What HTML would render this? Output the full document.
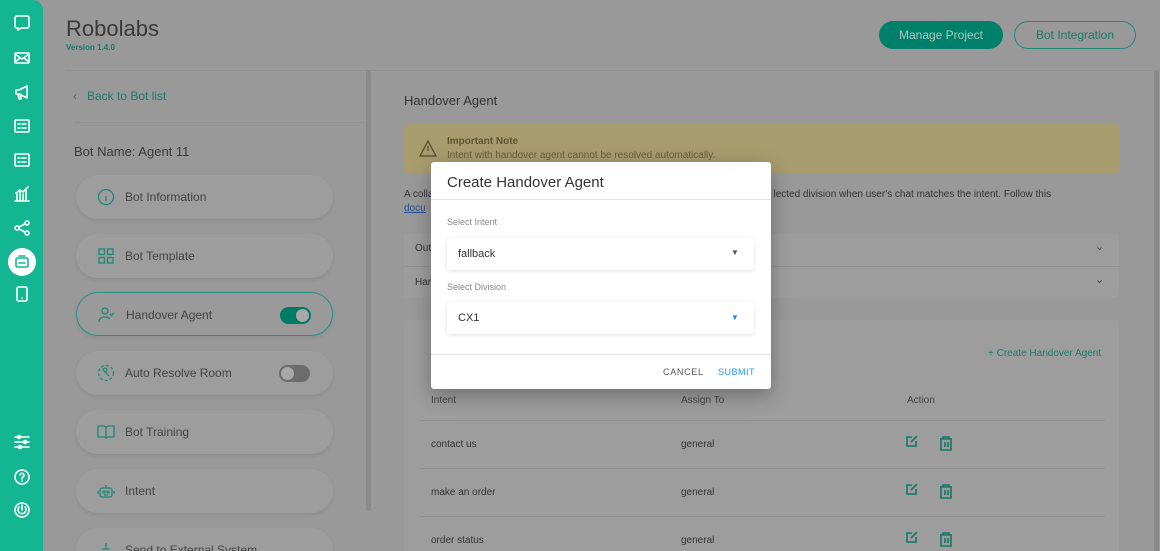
<!DOCTYPE html>
<html><head><meta charset="utf-8">
<style>
*{box-sizing:border-box;margin:0;padding:0}
html,body{width:1160px;height:551px;overflow:hidden}
body{background:#999;font-family:"Liberation Sans",sans-serif;position:relative;color:#3a3a3a}
.abs{position:absolute}
.side{left:0;top:0;width:43px;height:551px;background:#14b592;border-radius:0 10px 0 0}
.side svg{position:absolute;left:13px;width:18px;height:18px;fill:none;stroke:#fff;stroke-width:1.6;stroke-linecap:round;stroke-linejoin:round}
.pill{position:absolute;left:76px;width:257px;height:44px;border-radius:22px;background:#9d9d9d;box-shadow:0 2px 4px rgba(0,0,0,.08);font-size:12px;color:#444}
.pill span{position:absolute;left:49px;top:15px}
.pill svg{position:absolute;left:21px;top:13px;width:18px;height:18px;fill:none;stroke:#1d8a76;stroke-width:1.3}
.tgl{position:absolute;left:203px;top:14px;width:31px;height:17px;border-radius:9px}
.tgl i{position:absolute;top:2px;width:13px;height:13px;border-radius:50%;background:#a8a8a8}
.t{position:absolute;white-space:nowrap}
.row{position:absolute;left:420px;width:685px;height:1px;background:#8f8f8f}
</style></head><body>
<div class="abs side">
<svg style="top:14px" viewBox="0 0 18 18"><path d="M4 2h10a2 2 0 0 1 2 2v8a2 2 0 0 1-2 2H8l-3 2v-2H4a2 2 0 0 1-2-2V4a2 2 0 0 1 2-2z"/></svg>
<svg style="top:49px" viewBox="0 0 18 18"><rect x="2" y="4" width="14" height="10" rx="1"/><path d="M2 5l7 5 7-5M2 13l5-4M16 13l-5-4"/></svg>
<svg style="top:83px" viewBox="0 0 18 18"><path d="M3 7h3l8-4v12l-8-4H3zM5 11l1 5h2l-1-5"/></svg>
<svg style="top:117px" viewBox="0 0 18 18"><rect x="2" y="3" width="14" height="12" rx="1"/><path d="M5 7h2M5 11h2M9 7h4M9 11h4"/></svg>
<svg style="top:151px" viewBox="0 0 18 18"><rect x="2" y="3" width="14" height="12" rx="1"/><path d="M5 7h2M5 11h2M9 7h4M9 11h4"/></svg>
<svg style="top:185px" viewBox="0 0 18 18"><path d="M2 16h14M4 15V9M7 15V7M10 15V9M13 15V5M3 8l4-3 3 2 5-5"/></svg>
<svg style="top:219px" viewBox="0 0 18 18"><circle cx="4" cy="9" r="2"/><circle cx="14" cy="4" r="2"/><circle cx="14" cy="14" r="2"/><path d="M6 8l6-3M6 10l6 3"/></svg>
<div style="position:absolute;left:8px;top:248px;width:28px;height:28px;border-radius:50%;background:#fff"></div>
<svg style="top:253px;stroke:#14b592" viewBox="0 0 18 18"><rect x="3" y="5" width="12" height="9" rx="1.5"/><path d="M6 3h6M6 10h6"/></svg>
<svg style="top:285px" viewBox="0 0 18 18"><rect x="4" y="2" width="10" height="14" rx="1.5"/><path d="M9 13h.1"/></svg>
<svg style="top:433px" viewBox="0 0 18 18"><path d="M2 4h14M2 9h14M2 14h14"/><circle cx="6" cy="4" r="1.5"/><circle cx="12" cy="9" r="1.5"/><circle cx="7" cy="14" r="1.5"/></svg>
<svg style="top:468px" viewBox="0 0 18 18"><circle cx="9" cy="9" r="7"/><path d="M7 7a2 2 0 1 1 3 2c-1 .5-1 1-1 2M9 13h.1"/></svg>
<svg style="top:501px" viewBox="0 0 18 18"><circle cx="9" cy="9" r="7"/><path d="M9 4v5M6 6a4 4 0 1 0 6 0"/></svg>
</div>

<div class="t" style="left:66px;top:16px;font-size:22px;color:#3a3a3a">Robolabs</div>
<div class="t" style="left:66px;top:43px;font-size:8px;font-weight:bold;color:#1a7a68">Version 1.4.0</div>
<div class="abs" style="left:879px;top:21px;width:124px;height:28px;border-radius:14px;background:#00806a;color:#a9c7c0;font-size:12px;text-align:center;line-height:28px">Manage Project</div>
<div class="abs" style="left:1014px;top:21px;width:122px;height:28px;border-radius:14px;border:1px solid #1f8a78;color:#1f7a6a;font-size:12px;text-align:center;line-height:26px">Bot Integration</div>
<div class="abs" style="left:66px;top:70px;width:1094px;height:1px;background:#919191"></div>
<div class="abs" style="left:366px;top:71px;width:5px;height:440px;background:#8a8a8a;border-radius:3px"></div>
<div class="abs" style="left:1154px;top:71px;width:5px;height:480px;background:#8a8a8a"></div>

<div class="t" style="left:73px;top:89px;font-size:12px;color:#1f7a6a">&#8249;&nbsp;&nbsp;&nbsp;Back to Bot list</div>
<div class="abs" style="left:74px;top:122px;width:292px;height:1px;background:#919191"></div>
<div class="t" style="left:74px;top:144px;font-size:13px;color:#3a3a3a">Bot Name: Agent 11</div>

<div class="pill" style="top:175px"><svg viewBox="0 0 18 18"><circle cx="9" cy="9" r="7.5"/><path d="M9 8v5M9 5.5v.1"/></svg><span>Bot Information</span></div>
<div class="pill" style="top:234px"><svg viewBox="0 0 18 18"><rect x="2" y="2" width="5.5" height="5.5"/><rect x="10.5" y="2" width="5.5" height="5.5"/><rect x="2" y="10.5" width="5.5" height="5.5"/><rect x="10.5" y="10.5" width="5.5" height="5.5"/></svg><span>Bot Template</span></div>
<div class="pill" style="top:292px;border:1px solid #229480;background:#9a9a9a"><svg viewBox="0 0 18 18"><circle cx="7" cy="5" r="3"/><path d="M1 16c0-4 3-5 6-5s4 1 5 2M12 8l1.5 1.5L16 7"/></svg><span>Handover Agent</span><div class="tgl" style="background:#007a63"><i style="left:16px"></i></div></div>
<div class="pill" style="top:351px"><svg viewBox="0 0 18 18"><circle cx="9" cy="9" r="7.5" stroke-dasharray="3 2"/><path d="M6 6l6 6M6 6a2 2 0 1 1 2 2"/></svg><span>Auto Resolve Room</span><div class="tgl" style="background:#6c6c6c"><i style="left:2px"></i></div></div>
<div class="pill" style="top:410px"><svg viewBox="0 0 18 18"><path d="M1 3h6a2 2 0 0 1 2 2v11a2 2 0 0 0-2-2H1zM17 3h-6a2 2 0 0 0-2 2v11a2 2 0 0 1 2-2h6z"/></svg><span>Bot Training</span></div>
<div class="pill" style="top:469px"><svg viewBox="0 0 18 18"><rect x="3" y="6" width="12" height="9" rx="2"/><circle cx="7" cy="10" r="1"/><circle cx="11" cy="10" r="1"/><path d="M9 6V3M7 13h4M1 9v3M17 9v3"/></svg><span>Intent</span></div>
<div class="pill" style="top:528px"><svg viewBox="0 0 18 18"><path d="M9 2v6M5 8h8"/></svg><span>Send to External System</span></div>

<div class="t" style="left:404px;top:93px;font-size:13px;color:#333">Handover Agent</div>
<div class="abs" style="left:404px;top:124px;width:715px;height:49px;background:#a89c6f;border-radius:3px"></div>
<svg class="abs" style="left:419px;top:140px;width:18px;height:17px" viewBox="0 0 18 17" fill="none" stroke="#5e5430" stroke-width="1.4"><path d="M9 1L1 16h16zM9 6v5M9 13v.1"/></svg>
<div class="t" style="left:447px;top:136px;font-size:10px;color:#5e5430;font-weight:bold">Important Note</div>
<div class="t" style="left:447px;top:150px;font-size:10px;color:#6a5f38">Intent with handover agent cannot be resolved automatically.</div>
<div class="t" style="left:404px;top:189px;font-size:10px;color:#333">A colla<span style="margin-left:340px">lected division when user's chat matches the intent. Follow this</span></div>
<div class="t" style="left:404px;top:203px;font-size:10px;color:#2a4f8a;text-decoration:underline">docu</div>

<div class="abs" style="left:404px;top:234px;width:715px;height:64px;background:#9d9d9d;border-radius:3px"></div>
<div class="abs" style="left:404px;top:266px;width:715px;height:1px;background:#919191"></div>
<div class="t" style="left:415px;top:243px;font-size:10px;color:#333">Out</div>
<div class="t" style="left:415px;top:277px;font-size:10px;color:#333">Har</div>
<div class="t" style="left:1095px;top:240px;font-size:11px;color:#444">&#8964;</div>
<div class="t" style="left:1095px;top:273px;font-size:11px;color:#444">&#8964;</div>

<div class="abs" style="left:404px;top:320px;width:715px;height:240px;background:#9d9d9d;border-radius:3px"></div>
<div class="t" style="left:988px;top:348px;font-size:10px;color:#1f7a6a">+ Create Handover Agent</div>
<div class="t" style="left:431px;top:395px;font-size:10px;color:#444">Intent</div>
<div class="t" style="left:681px;top:395px;font-size:10px;color:#444">Assign To</div>
<div class="t" style="left:907px;top:395px;font-size:10px;color:#444">Action</div>
<div class="row" style="top:420px"></div>
<div class="row" style="top:468px"></div>
<div class="row" style="top:516px"></div>
<div class="t" style="left:431px;top:439px;font-size:10px;color:#333">contact us</div>
<div class="t" style="left:681px;top:439px;font-size:10px;color:#333">general</div>
<div class="t" style="left:431px;top:487px;font-size:10px;color:#333">make an order</div>
<div class="t" style="left:681px;top:487px;font-size:10px;color:#333">general</div>
<div class="t" style="left:431px;top:535px;font-size:10px;color:#333">order status</div>
<div class="t" style="left:681px;top:535px;font-size:10px;color:#333">general</div>
<svg class="abs" style="left:905px;top:434px" width="50" height="120" viewBox="0 0 50 120" fill="none" stroke="#0f7a66" stroke-width="1.6">
<g><path d="M7 3H2v9h9V7M6 8l6-6"/><path d="M35 5h12M38 5V3h6v2M36 5v11h10V5M40 8v5M43 8v5"/></g>
<g transform="translate(0,48)"><path d="M7 3H2v9h9V7M6 8l6-6"/><path d="M35 5h12M38 5V3h6v2M36 5v11h10V5M40 8v5M43 8v5"/></g>
<g transform="translate(0,96)"><path d="M7 3H2v9h9V7M6 8l6-6"/><path d="M35 5h12M38 5V3h6v2M36 5v11h10V5M40 8v5M43 8v5"/></g>
</svg>

<div class="abs" style="left:431px;top:162px;width:340px;height:227px;background:#fff;border-radius:3px;box-shadow:0 6px 20px rgba(0,0,0,.3)">
<div class="t" style="left:16px;top:12px;font-size:15px;color:#333">Create Handover Agent</div>
<div class="abs" style="left:0;top:37px;width:340px;height:1px;background:#e4e4e4"></div>
<div class="t" style="left:16px;top:55px;font-size:9px;color:#888">Select Intent</div>
<div class="abs" style="left:16px;top:76px;width:307px;height:32px;border-radius:3px;box-shadow:0 1px 4px rgba(0,0,0,.12)"><span class="t" style="left:11px;top:10px;font-size:11px;color:#333">fallback</span><span class="t" style="left:284px;top:10px;font-size:8px;color:#555">&#9660;</span></div>
<div class="t" style="left:16px;top:120px;font-size:9px;color:#888">Select Division</div>
<div class="abs" style="left:16px;top:140px;width:307px;height:32px;border-radius:3px;box-shadow:0 1px 4px rgba(0,0,0,.12)"><span class="t" style="left:11px;top:10px;font-size:11px;color:#333">CX1</span><span class="t" style="left:284px;top:11px;font-size:8px;color:#1e88e5">&#9660;</span></div>
<div class="abs" style="left:0;top:192px;width:340px;height:1px;background:#e4e4e4"></div>
<div class="t" style="left:232px;top:205px;font-size:9px;letter-spacing:.7px;color:#555">CANCEL</div>
<div class="t" style="left:287px;top:205px;font-size:9px;letter-spacing:.5px;color:#2196f3">SUBMIT</div>
</div>
</body></html>
